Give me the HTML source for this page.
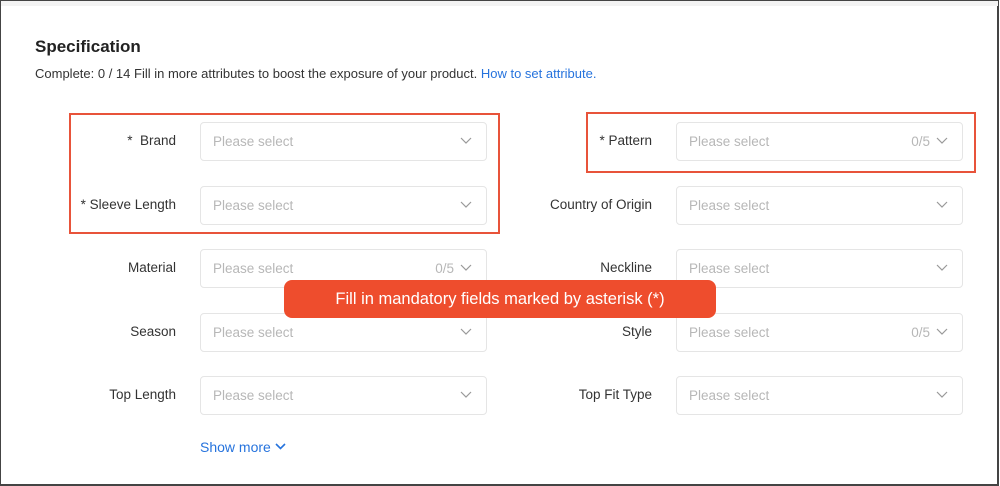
<!DOCTYPE html>
<html><head><meta charset="utf-8"><style>
*{margin:0;padding:0;box-sizing:border-box}
body{width:1000px;height:486px;background:#fff;font-family:"Liberation Sans",sans-serif;position:relative;overflow:hidden}
.frame{position:absolute;left:0;top:0;width:999px;height:486px;border:1px solid #444;border-bottom:2px solid #444;border-right:2px solid #444}
.topband{position:absolute;left:1px;top:1px;width:997px;height:5px;background:#f3f3f3}
.t{position:absolute;color:#222;white-space:nowrap}
.lab{position:absolute;font-size:13.5px;color:#333;text-align:right;width:200px;white-space:nowrap}
.in{position:absolute;width:287px;height:39px;border:1px solid #e5e5e5;border-radius:4px;font-size:13.5px;color:#b7b7b7;padding-left:12px;line-height:37px}
.in svg{position:absolute;right:14px;top:14px}
.cnt{position:absolute;right:32px;top:0}
.red{position:absolute;border:2px solid #e8533a}
.toast{position:absolute;left:284px;top:280px;width:432px;height:38px;background:#ee4d2d;border-radius:8px;color:#fff;font-size:16.5px;text-align:center;line-height:38px}
</style></head><body>
<div class="frame"></div><div class="topband"></div>
<div class="t" style="left:35px;top:37px;font-size:17px;font-weight:bold;color:#222">Specification</div>
<div class="t" style="left:35px;top:66px;font-size:13px;color:#333">Complete: 0 / 14 Fill in more attributes to boost the exposure of your product. <span style="color:#2673dd">How to set attribute.</span></div>

<div class="lab" style="left:-24px;top:133px">*&nbsp; Brand</div>
<div class="in" style="left:200px;top:122px">Please select<svg width="12" height="8" viewBox="0 0 12 8"><path d="M1 1l5 5 5-5" fill="none" stroke="#999" stroke-width="1.2"/></svg></div>
<div class="lab" style="left:-24px;top:197px">* Sleeve Length</div>
<div class="in" style="left:200px;top:186px">Please select<svg width="12" height="8" viewBox="0 0 12 8"><path d="M1 1l5 5 5-5" fill="none" stroke="#999" stroke-width="1.2"/></svg></div>
<div class="lab" style="left:-24px;top:260px">Material</div>
<div class="in" style="left:200px;top:249px">Please select<span class="cnt">0/5</span><svg width="12" height="8" viewBox="0 0 12 8"><path d="M1 1l5 5 5-5" fill="none" stroke="#999" stroke-width="1.2"/></svg></div>
<div class="lab" style="left:-24px;top:324px">Season</div>
<div class="in" style="left:200px;top:313px">Please select<svg width="12" height="8" viewBox="0 0 12 8"><path d="M1 1l5 5 5-5" fill="none" stroke="#999" stroke-width="1.2"/></svg></div>
<div class="lab" style="left:-24px;top:387px">Top Length</div>
<div class="in" style="left:200px;top:376px">Please select<svg width="12" height="8" viewBox="0 0 12 8"><path d="M1 1l5 5 5-5" fill="none" stroke="#999" stroke-width="1.2"/></svg></div>

<div class="lab" style="left:452px;top:133px">* Pattern</div>
<div class="in" style="left:676px;top:122px">Please select<span class="cnt">0/5</span><svg width="12" height="8" viewBox="0 0 12 8"><path d="M1 1l5 5 5-5" fill="none" stroke="#999" stroke-width="1.2"/></svg></div>
<div class="lab" style="left:452px;top:197px">Country of Origin</div>
<div class="in" style="left:676px;top:186px">Please select<svg width="12" height="8" viewBox="0 0 12 8"><path d="M1 1l5 5 5-5" fill="none" stroke="#999" stroke-width="1.2"/></svg></div>
<div class="lab" style="left:452px;top:260px">Neckline</div>
<div class="in" style="left:676px;top:249px">Please select<svg width="12" height="8" viewBox="0 0 12 8"><path d="M1 1l5 5 5-5" fill="none" stroke="#999" stroke-width="1.2"/></svg></div>
<div class="lab" style="left:452px;top:324px">Style</div>
<div class="in" style="left:676px;top:313px">Please select<span class="cnt">0/5</span><svg width="12" height="8" viewBox="0 0 12 8"><path d="M1 1l5 5 5-5" fill="none" stroke="#999" stroke-width="1.2"/></svg></div>
<div class="lab" style="left:452px;top:387px">Top Fit Type</div>
<div class="in" style="left:676px;top:376px">Please select<svg width="12" height="8" viewBox="0 0 12 8"><path d="M1 1l5 5 5-5" fill="none" stroke="#999" stroke-width="1.2"/></svg></div>

<div class="t" style="left:200px;top:439px;font-size:14px;color:#2673dd">Show more <svg width="11" height="7" viewBox="0 0 11 7" style="vertical-align:2px"><path d="M1 1l4.5 4.5L10 1" fill="none" stroke="#2673dd" stroke-width="1.6"/></svg></div>

<div class="red" style="left:69px;top:113px;width:431px;height:121px"></div>
<div class="red" style="left:586px;top:112px;width:390px;height:61px"></div>
<div class="toast">Fill in mandatory fields marked by asterisk (*)</div>
</body></html>
